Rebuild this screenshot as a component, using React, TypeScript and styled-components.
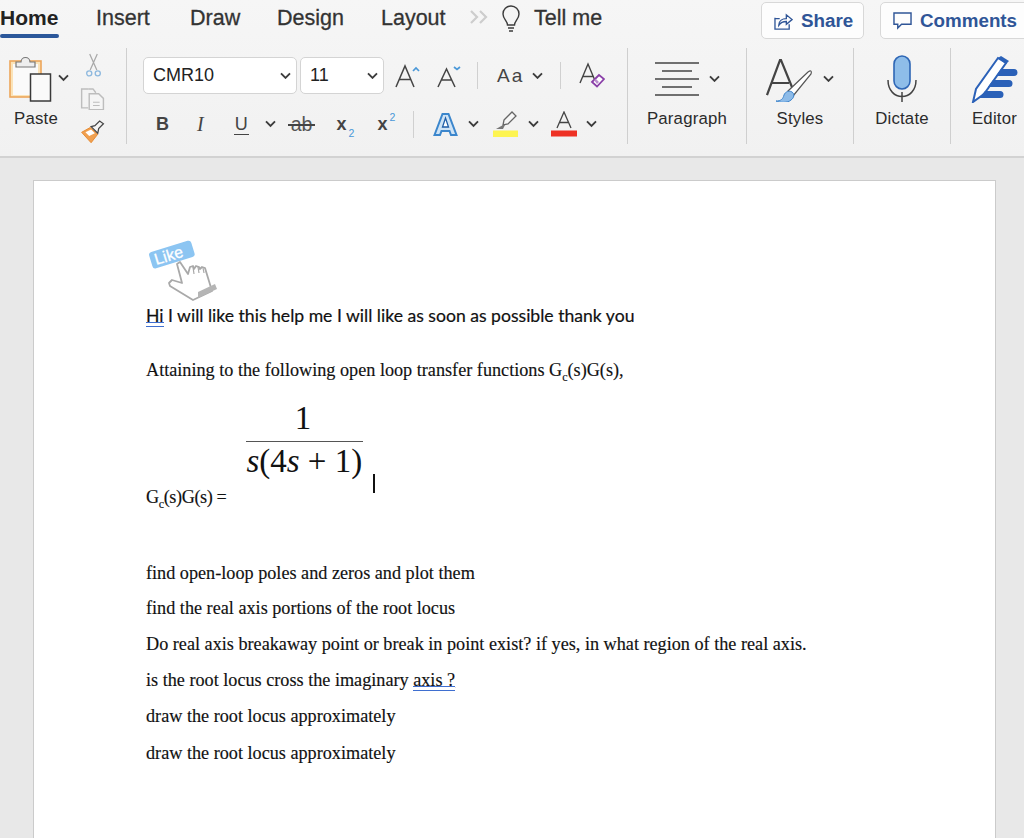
import React from "react";
import styled, { createGlobalStyle } from "styled-components";

const Global = createGlobalStyle`
  html, body { margin: 0; padding: 0; height: 838px; overflow: hidden; background: #e8e8e8; }
  #root { height: 838px; overflow: hidden; }
  * { box-sizing: border-box; }
`;

const Shell = styled.div`width: 1024px; height: 838px; overflow: hidden; display: flex; flex-direction: column; font-family: "Liberation Sans", Arial, sans-serif;`;
const Header = styled.header`height: 158px; flex: none; background: linear-gradient(#f6f6f6, #f1f1f1); border-bottom: 2px solid #d2d2d2; display: flex; flex-direction: column;`;
const TabBar = styled.div`height: 48px; flex: none; display: flex; align-items: flex-start; overflow: hidden;`;
const Tab = styled.div<{ $active?: boolean; $w: number }>`
  width: ${p => p.$w}px; flex: none; height: 39px; padding-top: 6px; line-height: 24px; font-size: ${p => p.$active ? 21 : 21.5}px; color: ${p => p.$active ? "#222" : "#333"};
  font-weight: ${p => p.$active ? 700 : 400}; -webkit-text-stroke: ${p => p.$active ? 0 : "0.3px"}; position: relative; white-space: nowrap;
  ${p => p.$active ? `&::after { content: ""; position: absolute; left: 0; top: 34px; width: 59px; height: 4px; border-radius: 2px; background: #2b579a; }` : ""}
`;
const Action = styled.button<{ $w: number; $ml: number }>`
  width: ${p => p.$w}px; margin-left: ${p => p.$ml}px; flex: none; height: 37px; margin-top: 2px; display: flex; align-items: center; gap: 8px; padding: 0 0 0 12px;
  background: #fdfdfd; border: 1px solid #d8d8d8; border-radius: 5px; color: #2f5597; font: 700 18.8px "Liberation Sans", Arial, sans-serif; white-space: nowrap;
`;
const Ribbon = styled.div`flex: 1; display: flex; align-items: flex-start;`;
const Group = styled.div<{ $w: number; $last?: boolean }>`
  width: ${p => p.$w}px; flex: none; height: 96px; position: relative; ${p => p.$last ? "" : "border-right: 1px solid #cfcfcf;"}
`;
const ClipGroup = styled(Group)`display: flex; padding-left: 9px;`;
const PasteCol = styled.div`width: 71px; display: flex; flex-direction: column;`;
const PasteTop = styled.div`display: flex; align-items: center; height: 56px; padding-top: 4px; gap: 5px;`;
const Label = styled.div`font-size: 16.8px; letter-spacing: 0.2px; line-height: 20px; color: #2b2b2b; white-space: nowrap;`;
const PasteLabel = styled(Label)`margin: 5px 0 0 5px;`;
const SmallCol = styled.div`display: flex; flex-direction: column; align-items: flex-start; gap: 10px; padding-top: 5px;`;
const FontGroup = styled(Group)`padding: 9px 0 0 16px; display: flex; flex-direction: column;`;
const FontRow = styled.div`height: 37px; display: flex; align-items: center;`;
const FontRow2 = styled(FontRow)`margin-top: 12px; height: 36px; padding-left: 13px;`;
const Select = styled.div<{ $w: number; $ml?: number }>`
  width: ${p => p.$w}px; margin-left: ${p => p.$ml ?? 0}px; height: 37px; flex: none; background: #fff; border: 1px solid #d4d4d4; border-radius: 5px;
  display: flex; align-items: center; justify-content: space-between; padding: 0 5px 0 9px; font-size: 18px; color: #222;
`;
const Slot = styled.div<{ $ml: number }>`margin-left: ${p => p.$ml}px; flex: none; display: flex; align-items: center;`;
const TabIcon = styled.div<{ $w: number; $pt: number }>`width: ${p => p.$w}px; padding-top: ${p => p.$pt}px; flex: none; display: flex;`;
const Sep = styled.div<{ $ml: number }>`margin-left: ${p => p.$ml}px; width: 1px; height: 27px; flex: none; background: #d0d0d0;`;
const CaseText = styled.span`font-size: 19px; letter-spacing: 2px; color: #444; line-height: 24px;`;
const BigCol = styled(Group)<{ $pl?: number }>`display: flex; flex-direction: column; align-items: center; padding-left: ${p => p.$pl ?? 0}px;`;
const BigTop = styled.div`height: 61px; display: flex; align-items: center; gap: 10px;`;
const BigLabel = styled(Label)`margin-top: 0;`;

const Canvas = styled.main`flex: 1; padding: 22px 0 0 33px; overflow: hidden;`;
const Page = styled.article`width: 963px; height: 720px; background: #fff; border: 1px solid #cbcbcb; padding: 57px 0 0 112px;`;
const Sticker = styled.div`height: 64px;`;
const Calibri = styled.p`margin: 1px 0 0; font: 17.6px/26px Lato, "Liberation Sans", sans-serif; color: #111; white-space: nowrap; -webkit-text-stroke: 0.2px #111;`;
const Body = styled.p<{ $mt: number }>`margin: ${p => p.$mt}px 0 0; font: 18.2px/24px "Liberation Serif", "Times New Roman", serif; color: #111; white-space: nowrap; -webkit-text-stroke: 0.15px #111;`;
const Checked = styled.span`position: relative; text-decoration: underline; text-decoration-thickness: 1px; &::after { content: ""; position: absolute; left: 0; right: 0; bottom: -1px; height: 3px; background: #fff; border-top: 1px solid #3f6fd0; border-bottom: 1px solid #3f6fd0; }`;
const EqRow = styled.div`margin-top: 19px; height: 108px; display: flex; align-items: flex-end; position: relative;`;
const EqLabel = styled.span`font: 18.2px/24px "Liberation Serif", serif; letter-spacing: -0.4px; color: #111; -webkit-text-stroke: 0.15px #111; white-space: nowrap;`;
const Sub = styled.sub`font-size: 12px; line-height: 0;`;
const Fraction = styled.div`width: 117px; margin: 0 0 25px 20px; display: flex; flex-direction: column; align-items: center; font: 33px/36px "Liberation Serif", serif; color: #111; align-self: flex-end;`;
const Num = styled.div`width: 100%; text-align: center; height: 41px; line-height: 34px; border-bottom: 1px solid #555; padding-right: 4px;`;
const Den = styled.div`width: 100%; height: 42px; line-height: 38px; text-align: right; padding-right: 2px; white-space: nowrap; overflow: hidden;`;
const Caret = styled.div`width: 2px; height: 19px; background: #111; margin: 0 0 16px 10px; flex: none;`;

const Chev = ({ size = 11 }: { size?: number }) => (
  <svg width={size} height={size * 0.7} viewBox="0 0 11 7" fill="none"><path d="M1 1l4.5 4.5L10 1" stroke="#3c3c3c" strokeWidth="1.9" /></svg>
);

const Paste = () => (
  <svg width="44" height="48" viewBox="0 0 44 48">
    <rect x="1" y="7" width="31" height="36" fill="#fbe3b8" stroke="#eda65a" strokeWidth="1.6" />
    <rect x="4" y="10" width="25" height="31" fill="#fafafa" />
    <path d="M7 13V8h5a4.5 4.5 0 0 1 9 0h5v5z" fill="#eee" stroke="#777" strokeWidth="1.2" />
    <rect x="21.5" y="20" width="20" height="27" fill="#fafafa" stroke="#3a3a3a" strokeWidth="1.5" />
  </svg>
);
const Scissors = () => (
  <svg width="17" height="26" viewBox="0 0 17 26" fill="none" style={{ marginLeft: 5 }}>
    <path d="M4.5 1l7.5 17M12.5 1L5 18" stroke="#a8a8a8" strokeWidth="1.3" />
    <circle cx="4" cy="21.5" r="2.7" stroke="#8db8de" strokeWidth="1.4" /><circle cx="13" cy="21.5" r="2.7" stroke="#8db8de" strokeWidth="1.4" />
  </svg>
);
const Copy = () => (
  <svg width="26" height="24" viewBox="0 0 26 24" fill="none" stroke="#bdbdbd" strokeWidth="1.5">
    <path d="M8 1H1v20h7" /><path d="M8 1h5l3 4" /><path d="M9 6h10l5 5v12H9z" fill="#f5f5f5" /><path d="M13 15h7M13 18.5h7" strokeWidth="1.1" />
  </svg>
);
const Brush = () => (
  <svg width="26" height="25" viewBox="0 0 26 25">
    <path d="M1 13l9-5 8 7-7 9z" fill="#f0a050" stroke="#e68a30" strokeWidth="1" />
    <path d="M5 13l6-3 4 4-6 3z" fill="#fff" />
    <path d="M11 7l4-1 5-5 4 3-5 5-1 5z" fill="#f5f5f5" stroke="#444" strokeWidth="1.3" />
  </svg>
);
const GrowA = ({ down }: { down?: boolean }) => (
  <svg width="25" height="24" viewBox="0 0 25 24" fill="none">
    <path d={down ? "M1 23L9.5 5 18 23M4 16h11" : "M1 23L10 2l9 21M4.5 15.5h11"} stroke="#444" strokeWidth="1.5" />
    <path d={down ? "M17 3l3 2.5L23 3" : "M18 7l3-3 3 3"} stroke="#4a98d8" strokeWidth="1.7" />
  </svg>
);
const ClearFmt = () => (
  <svg width="26" height="28" viewBox="0 0 26 28" fill="none">
    <path d="M1 21L9 2l8 19M4 14.5h10" stroke="#444" strokeWidth="1.4" />
    <path d="M13 20l7-7 5 4-7 7.5z" fill="#fff" stroke="#8a3fa8" strokeWidth="1.8" /><path d="M15 18l3 4 2-2-3-3z" fill="#b98ccb" />
  </svg>
);
const FmtB = styled.span`font: 700 18px/22px "Liberation Sans", sans-serif; color: #444; `;
const FmtI = styled.span`font: italic 400 20px/22px "Liberation Serif", serif; color: #444;`;
const FmtU = styled.span`font: 400 18px/20px "Liberation Sans", sans-serif; color: #444; border-bottom: 1.5px solid #444; padding: 0 1px;`;
const FmtS = styled.span`font: 400 19.5px/22px "Liberation Sans", sans-serif; color: #555; position: relative; &::after { content: ""; position: absolute; left: -3px; right: -3px; top: 11px; height: 1.5px; background: #444; }`;
const FmtX = styled.span`font: 700 18px/22px "Liberation Sans", sans-serif; color: #444; position: relative; padding-right: 8px;`;
const Script = styled.i<{ $up?: boolean }>`position: absolute; right: 0; font: 400 10.5px/10px "Liberation Sans", sans-serif; color: #4a98d8; ${p => p.$up ? "top: -1px;" : "bottom: -3px;"}`;
const EffectA = () => (
  <svg width="25" height="25" viewBox="0 0 25 25"><path d="M1.5 23L9.5 2h6l8 21h-5.5l-1.5-4H8.5L7 23z" fill="#cfe3f5" stroke="#3b86cc" strokeWidth="2" /><path d="M9.5 15h6l-3-9z" fill="#fff" stroke="#1f5ea8" strokeWidth="1.3" /></svg>
);
const Marker = () => (
  <svg width="26" height="26" viewBox="0 0 26 26" fill="none">
    <path d="M11 9l8-8 4 4-8 8-5 1z" fill="#f7f7f7" stroke="#666" strokeWidth="1.3" /><path d="M3 18l7-4 2 0-2 4z" fill="#777" />
    <rect x="0" y="19.5" width="25" height="6.5" fill="#fdf451" />
  </svg>
);
const ColorA = () => (
  <svg width="26" height="26" viewBox="0 0 26 26" fill="none">
    <path d="M6 17L13 1l7 16M8.5 11.5h9" stroke="#444" strokeWidth="1.3" /><rect y="19.5" width="26" height="6" fill="#ee3124" />
  </svg>
);
const Lines = () => (
  <svg width="44" height="34" viewBox="0 0 44 34" stroke="#444" strokeWidth="1.5">
    <path d="M0 1h44M7 9h30M0 17h44M7 25h30M0 33h44" />
  </svg>
);
const Styles = () => (
  <svg width="47" height="46" viewBox="0 0 47 46" fill="none">
    <path d="M1 39L14 4h1l13 32M6 27h17" stroke="#444" strokeWidth="2.2" />
    <path d="M22 35L42 16c3-2 4-1 3 2L27 40z" fill="#fff" stroke="#555" strokeWidth="1.2" />
    <path d="M10 45c5 0 7-2 8-6 1-3 5-5 8-3 3 2 2 6-1 8-3 3-11 3-15 1z" fill="#8dbbe8" stroke="#3f85cc" strokeWidth="1" />
  </svg>
);
const Mic = () => (
  <svg width="30" height="48" viewBox="0 0 30 48" fill="none">
    <rect x="7" y="1" width="16" height="33" rx="8" fill="#8ebde9" stroke="#2e66b5" strokeWidth="1.6" />
    <path d="M1 25c0 22 28 22 28 0M15 37v10" stroke="#444" strokeWidth="1.5" />
  </svg>
);
const Editor = () => (
  <svg width="48" height="48" viewBox="0 0 48 48" fill="none">
    <path d="M2 47l3-13L27 3l8 5-22 31z" fill="#fff" stroke="#2b61b8" strokeWidth="2" /><path d="M27 3l3-2 8 5-3 3z" fill="#2b61b8" />
    <path d="M30 14h13a3 3 0 0 1 0 7H25zM22 25h16a3.5 3.5 0 0 1 0 7H17zM14 36h15a3.5 3.5 0 0 1 0 7H8z" fill="#2b61b8" />
  </svg>
);
const Bulb = () => (
  <svg width="18" height="29" viewBox="0 0 18 29" fill="none" stroke="#3c3c3c" strokeWidth="1.4">
    <path d="M5.500 21c0-4-4.500-6-4.500-11a8 8 0 0 1 16 0c0 5-4.500 7-4.500 11z" /><path d="M6 24h6M7 27h4" />
  </svg>
);
const ShareIcon = () => (
  <svg width="19" height="18" viewBox="0 0 20 19" fill="none" stroke="#2f5597" strokeWidth="1.4">
    <path d="M1 6v12h15v-5M1 7h5" /><path d="M5 14c0-5 4-7 8-7V3l6 5-6 5v-3c-3 0-6 1-8 4z" />
  </svg>
);
const CommentIcon = () => (
  <svg width="19" height="18" viewBox="0 0 20 19" fill="none" stroke="#2f5597" strokeWidth="1.5">
    <path d="M1 1h18v12H9l-4 4v-4H1z" />
  </svg>
);
const LikeSticker = () => (
  <svg width="76" height="64" viewBox="0 0 76 64">
    <g transform="rotate(-17 26 17)">
      <rect x="4" y="8" width="44" height="17" rx="3" fill="#8cc5f2" />
      <text x="8" y="22" fontFamily="Liberation Sans, sans-serif" fontSize="16" fill="#fff" stroke="#fff" strokeWidth="0.3">Like</text>
    </g>
    <path d="M31 26l3-2 8 12 2-7 3-1 1 3 2-3 3 1 1 2 2-2 3 1 7 23-19 9-23-14-1-3 3-3 10 3z" fill="#fff" stroke="#a9a9a9" strokeWidth="1.8" strokeLinejoin="round" />
    <path d="M52 60l19-9-2-5-17 8z" fill="#b5b5b5" />
    <path d="M47 29l1 7M52 29l1 6M57 30l1 5" stroke="#a9a9a9" strokeWidth="1.200" fill="none" />
  </svg>
);

export default function App() {
  return (
    <Shell>
      <Global />
      <Header>
        <TabBar>
          <Tab $active $w={96}>Home</Tab>
          <Tab $w={94}>Insert</Tab>
          <Tab $w={87}>Draw</Tab>
          <Tab $w={104}>Design</Tab>
          <Tab $w={89}>Layout</Tab>
          <TabIcon $w={32} $pt={10}>
            <svg width="18" height="14" viewBox="0 0 18 14" fill="none" stroke="#cdcdcd" strokeWidth="2.2"><path d="M1 1l6 6-6 6M10 1l6 6-6 6" /></svg>
          </TabIcon>
          <TabIcon $w={32} $pt={4}><Bulb /></TabIcon>
          <Tab $w={110}>Tell me</Tab>
          <Action $w={103} $ml={117}><ShareIcon />Share</Action>
          <Action $w={160} $ml={16}><CommentIcon />Comments</Action>
        </TabBar>
        <Ribbon>
          <ClipGroup $w={127}>
            <PasteCol>
              <PasteTop><Paste /><Chev /></PasteTop>
              <PasteLabel>Paste</PasteLabel>
            </PasteCol>
            <SmallCol>
              <Scissors />
              <Copy />
              <Brush />
            </SmallCol>
          </ClipGroup>
          <FontGroup $w={501}>
            <FontRow>
              <Select $w={154}>CMR10<Chev /></Select>
              <Select $w={84} $ml={3}>11<Chev /></Select>
              <Slot $ml={11}><GrowA /></Slot>
              <Slot $ml={17}><GrowA down /></Slot>
              <Sep $ml={15} />
              <Slot $ml={19}><CaseText>Aa</CaseText></Slot>
              <Slot $ml={8}><Chev /></Slot>
              <Sep $ml={17} />
              <Slot $ml={18}><ClearFmt /></Slot>
            </FontRow>
            <FontRow2>
              <FmtB>B</FmtB>
              <Slot $ml={28}><FmtI>I</FmtI></Slot>
              <Slot $ml={30}><FmtU>U</FmtU></Slot>
              <Slot $ml={16}><Chev /></Slot>
              <Slot $ml={15}><FmtS>ab</FmtS></Slot>
              <Slot $ml={24}><FmtX>x<Script>2</Script></FmtX></Slot>
              <Slot $ml={23}><FmtX>x<Script $up>2</Script></FmtX></Slot>
              <Sep $ml={18} />
              <Slot $ml={19}><EffectA /></Slot>
              <Slot $ml={10}><Chev /></Slot>
              <Slot $ml={14}><Marker /></Slot>
              <Slot $ml={9}><Chev /></Slot>
              <Slot $ml={12}><ColorA /></Slot>
              <Slot $ml={9}><Chev /></Slot>
            </FontRow2>
          </FontGroup>
          <BigCol $w={119} $pl={0}>
            <BigTop><Lines /><Chev /></BigTop>
            <BigLabel>Paragraph</BigLabel>
          </BigCol>
          <BigCol $w={107} $pl={0}>
            <BigTop><Styles /><Chev /></BigTop>
            <BigLabel>Styles</BigLabel>
          </BigCol>
          <BigCol $w={97}>
            <BigTop><Mic /></BigTop>
            <BigLabel>Dictate</BigLabel>
          </BigCol>
          <BigCol $w={74} $last $pl={13}>
            <BigTop><Editor /></BigTop>
            <BigLabel>Editor</BigLabel>
          </BigCol>
        </Ribbon>
      </Header>
      <Canvas>
        <Page>
          <Sticker><LikeSticker /></Sticker>
          <Calibri><Checked>Hi</Checked> I will like this help me I will like as soon as possible thank you</Calibri>
          <Body $mt={29}>Attaining to the following open loop transfer functions G<Sub>c</Sub>(s)G(s),</Body>
          <EqRow>
            <EqLabel>G<Sub>c</Sub>(s)G(s) =</EqLabel>
            <Fraction>
              <Num>1</Num>
              <Den><i>s</i>(4<i>s</i> + 1)</Den>
            </Fraction>
            <Caret />
          </EqRow>
          <Body $mt={52}>find open-loop poles and zeros and plot them</Body>
          <Body $mt={11}>find the real axis portions of the root locus</Body>
          <Body $mt={12}>Do real axis breakaway point or break in point exist? if yes, in what region of the real axis.</Body>
          <Body $mt={12}>is the root locus cross the imaginary <Checked>axis ?</Checked></Body>
          <Body $mt={12}>draw the root locus approximately</Body>
          <Body $mt={13}>draw the root locus approximately</Body>
        </Page>
      </Canvas>
    </Shell>
  );
}
